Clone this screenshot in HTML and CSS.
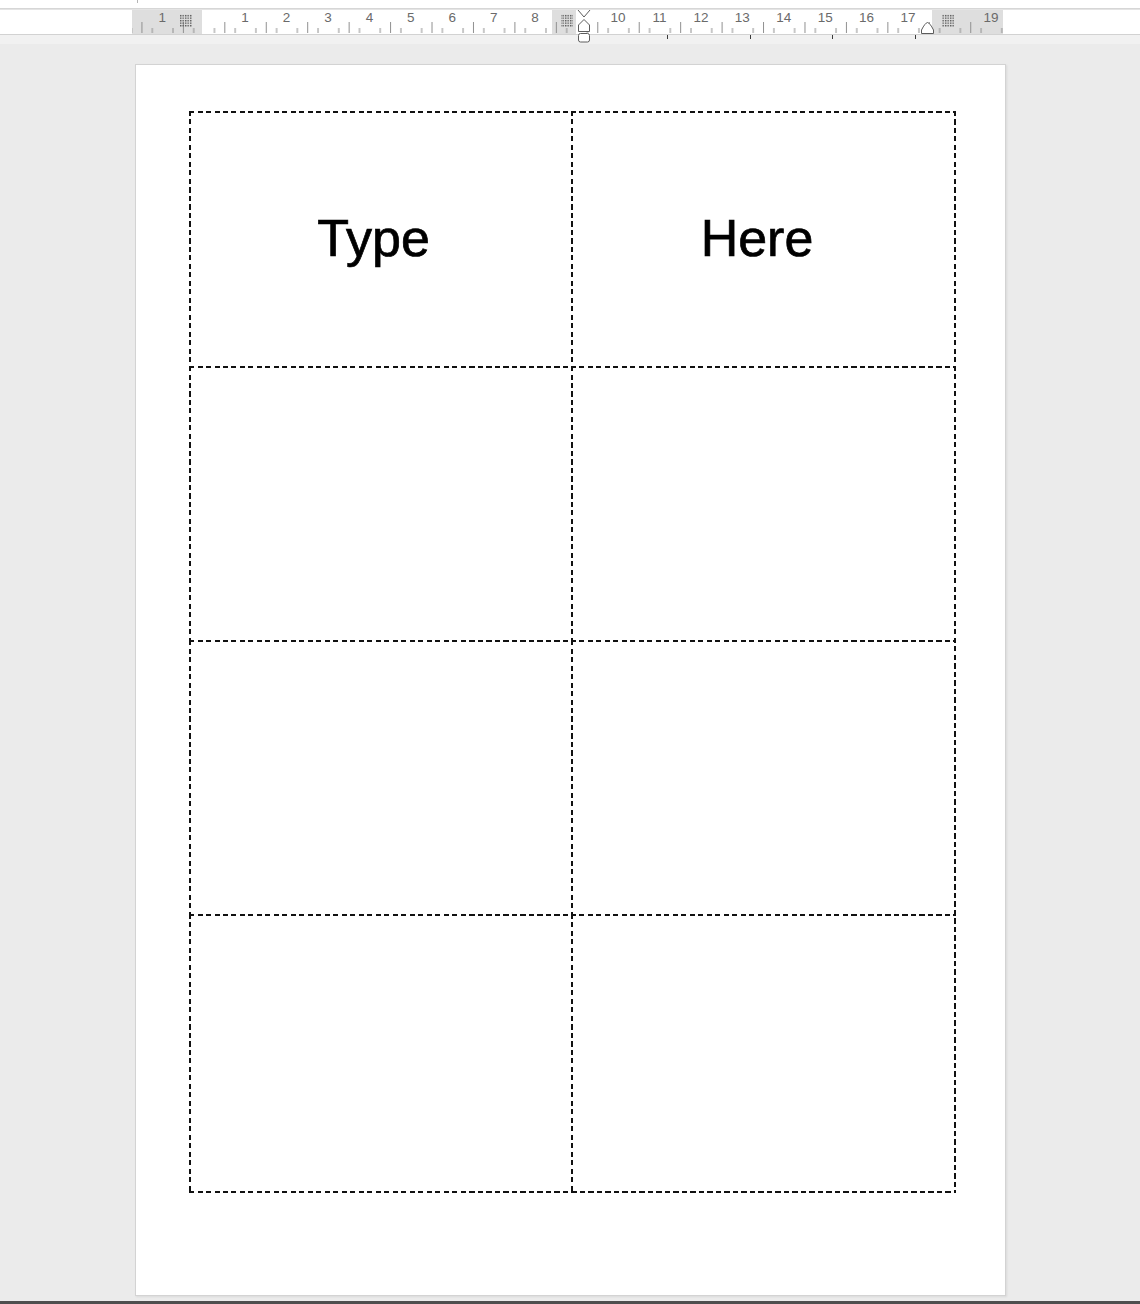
FILE: index.html
```html
<!DOCTYPE html>
<html lang="en">
<head>
<meta charset="utf-8">
<title>Labels</title>
<link rel="stylesheet" href="styles.css">
</head>
<body>
<header class="ruler-bar">
<svg class="ruler" width="1140" height="44" viewBox="0 0 1140 44" xmlns="http://www.w3.org/2000/svg">
  <defs>
    <pattern id="ticks" x="203.6" y="0" width="41.44" height="44" patternUnits="userSpaceOnUse">
      <line x1="10.86" y1="28" x2="10.86" y2="33" stroke="#8f8f8f" stroke-width="1"/>
      <line x1="21.22" y1="22" x2="21.22" y2="33" stroke="#8f8f8f" stroke-width="1"/>
      <line x1="31.58" y1="28" x2="31.58" y2="33" stroke="#8f8f8f" stroke-width="1"/>
    </pattern>
    <pattern id="dots" x="0" y="0" width="2.5" height="2.5" patternUnits="userSpaceOnUse">
      <rect x="0" y="0" width="1.4" height="1.4" fill="#5a5a5a"/>
    </pattern>
  </defs>
  <rect x="0" y="0" width="1140" height="9" fill="#ffffff"/>
  <line x1="137.5" y1="0" x2="137.5" y2="3" stroke="#b5b5b5"/>
  <line x1="0" y1="8.5" x2="1140" y2="8.5" stroke="#d6d6d6"/>
  <rect x="0" y="9" width="1140" height="25" fill="#ffffff"/>
  <rect x="0" y="35" width="1140" height="9" fill="#f1f1f1"/>
  <line x1="0" y1="34.5" x2="1140" y2="34.5" stroke="#d2d2d2"/>
  <line x1="0" y1="9.5" x2="1140" y2="9.5" stroke="#e4e4e4"/>

  <rect x="132" y="10" width="70" height="24" fill="#dedede"/>
  <rect x="552" y="10" width="24" height="24" fill="#dedede"/>
  <rect x="932" y="10" width="71" height="24" fill="#dedede"/>
  <rect x="132" y="10" width="871" height="24" fill="url(#ticks)"/>

  <g class="nums" font-family="Liberation Sans, Arial, sans-serif" font-size="13.5" fill="#6a6a6a" text-anchor="middle">
    <text x="162.2" y="22">1</text>
    <text x="245" y="22">1</text>
    <text x="286.5" y="22">2</text>
    <text x="327.9" y="22">3</text>
    <text x="369.4" y="22">4</text>
    <text x="410.8" y="22">5</text>
    <text x="452.2" y="22">6</text>
    <text x="493.7" y="22">7</text>
    <text x="535.1" y="22">8</text>
    <text x="618" y="22">10</text>
    <text x="659.4" y="22">11</text>
    <text x="700.9" y="22">12</text>
    <text x="742.3" y="22">13</text>
    <text x="783.8" y="22">14</text>
    <text x="825.2" y="22">15</text>
    <text x="866.6" y="22">16</text>
    <text x="908.1" y="22">17</text>
    <text x="991" y="22">19</text>
  </g>

  <rect x="180" y="14" width="12" height="13" fill="url(#dots)"/>
  <rect x="561" y="14" width="12" height="13" fill="url(#dots)"/>
  <rect x="942" y="14" width="12" height="13" fill="url(#dots)"/>

  <path d="M578 10 L584 17 L590 10" fill="none" stroke="#5c5c5c" stroke-width="1"/>
  <path d="M578.5 31.5 L578.5 25 L584 19.5 L589.5 25 L589.5 31.5 Z" fill="#ffffff" stroke="#5c5c5c" stroke-width="1"/>
  <rect x="578.5" y="33.5" width="11" height="8.5" rx="2" fill="#ffffff" stroke="#5c5c5c" stroke-width="1"/>
  <path d="M921.5 33.5 L921.5 30 Q925 23 927.5 22.5 Q930 23 933.5 30 L933.5 33.5 Z" fill="#ffffff" stroke="#5c5c5c" stroke-width="1"/>

  <g stroke="#3a3a3a" stroke-width="1">
    <line x1="667.5" y1="35" x2="667.5" y2="39"/>
    <line x1="750.5" y1="35" x2="750.5" y2="39"/>
    <line x1="832.5" y1="35" x2="832.5" y2="39"/>
    <line x1="915.5" y1="35" x2="915.5" y2="39"/>
  </g>
</svg>
</header>
<main class="workspace">
  <div class="page">
    <div class="labels">
      <div class="cell"><span class="cell-text">Type</span></div>
      <div class="cell"><span class="cell-text">Here</span></div>
      <div class="cell"></div>
      <div class="cell"></div>
      <div class="cell"></div>
      <div class="cell"></div>
      <div class="cell"></div>
      <div class="cell"></div>
    </div>
  </div>
</main>
<div class="frame-bottom"></div>
</body>
</html>
```
FILE: styles.css
```css
html, body {
  margin: 0;
  padding: 0;
}

body {
  width: 1140px;
  height: 1304px;
  overflow: hidden;
  background: #ebebeb;
  font-family: "Liberation Sans", Arial, sans-serif;
  color: #000;
}

.ruler-bar {
  display: block;
  height: 44px;
}

.ruler {
  display: block;
}

.workspace {
  padding: 20px 0 0 135px;
  height: 1232px;
}

.page {
  width: 869px;
  height: 1230px;
  background: #ffffff;
  border: 1px solid #d3d3d3;
  box-shadow: 1px 1px 2px rgba(0, 0, 0, 0.08);
  box-sizing: content-box;
}

.labels {
  margin: 46px 0 0 53px;
  width: 767px;
  height: 1082px;
  display: grid;
  grid-template-columns: 382px 385px;
  grid-template-rows: 255px 274px 274px 279px;
  background:
    repeating-linear-gradient(90deg, #111 0 5px, transparent 5px 8.5px) left bottom / 100% 2px no-repeat,
    repeating-linear-gradient(180deg, #111 0 5px, transparent 5px 8.5px) right top / 2px 100% no-repeat;
}

.cell {
  display: flex;
  align-items: center;
  justify-content: center;
  padding-right: 13px;
  background:
    repeating-linear-gradient(90deg, #111 0 5px, transparent 5px 8.5px) left top / 100% 2px no-repeat,
    repeating-linear-gradient(180deg, #111 0 5px, transparent 5px 8.5px) left top / 2px 100% no-repeat;
}

.cell-text {
  font-size: 52px;
  line-height: 1.15;
  -webkit-text-stroke: 0.7px #000;
}

.frame-bottom {
  margin-top: 5px;
  height: 3px;
  background: #4e4e4e;
}
```
